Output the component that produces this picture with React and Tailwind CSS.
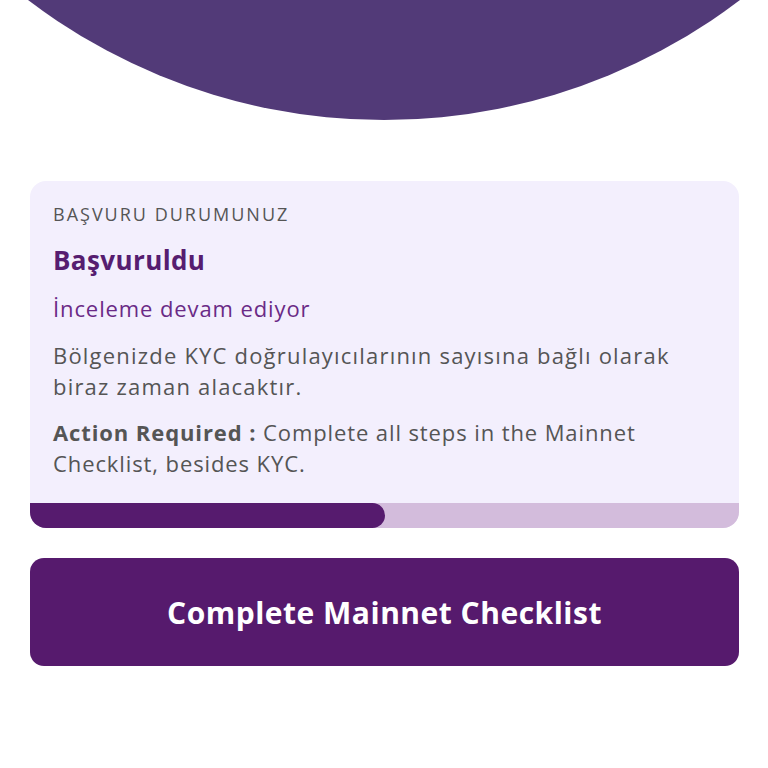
export default function App() {
  return (
    <div className="w-full h-[768px] bg-white overflow-hidden flex flex-col" style={{ fontFamily: '"Open Sans", "Noto Sans", sans-serif' }}>
      <div className="shrink-0 w-[1176px] h-[1176px] rounded-full bg-[#523a78] mt-[-1056px] ml-[-204px]" />
      <div className="mt-[61px] ml-[30px] mr-[29px] rounded-[16px] bg-[#f3effd] overflow-hidden">
        <div className="px-[23px] pt-[20px] pb-[24px]">
          <div className="text-[18px] leading-[26px] tracking-[2px] text-[#555]">BAŞVURU DURUMUNUZ</div>
          <div className="mt-[16px] text-[26px] leading-[34px] tracking-[0.4px] font-bold text-[#561d70]">Başvuruldu</div>
          <div className="mt-[16px] text-[22px] leading-[30px] tracking-[0.9px] text-[#6a2a86]">İnceleme devam ediyor</div>
          <div className="mt-[17px] text-[22px] leading-[31px] tracking-[1.2px] text-[#555]">
            Bölgenizde KYC doğrulayıcılarının sayısına bağlı olarak<br />biraz zaman alacaktır.
          </div>
          <div className="mt-[15px] text-[22px] leading-[31px] tracking-[0.9px] text-[#555]">
            <span className="font-bold">Action Required :</span> Complete all steps in the Mainnet<br />Checklist, besides KYC.
          </div>
        </div>
        <div className="h-[25px] bg-[#d3bcdc] flex">
          <div className="w-[355px] h-full rounded-r-full bg-[#561b6e]" />
        </div>
      </div>
      <div className="mt-[30px] ml-[30px] mr-[29px] h-[108px] rounded-[14px] bg-[#561a6d] flex items-center justify-center">
        <span className="text-white font-bold text-[30px] tracking-[0.5px]">Complete Mainnet Checklist</span>
      </div>
    </div>
  );
}
